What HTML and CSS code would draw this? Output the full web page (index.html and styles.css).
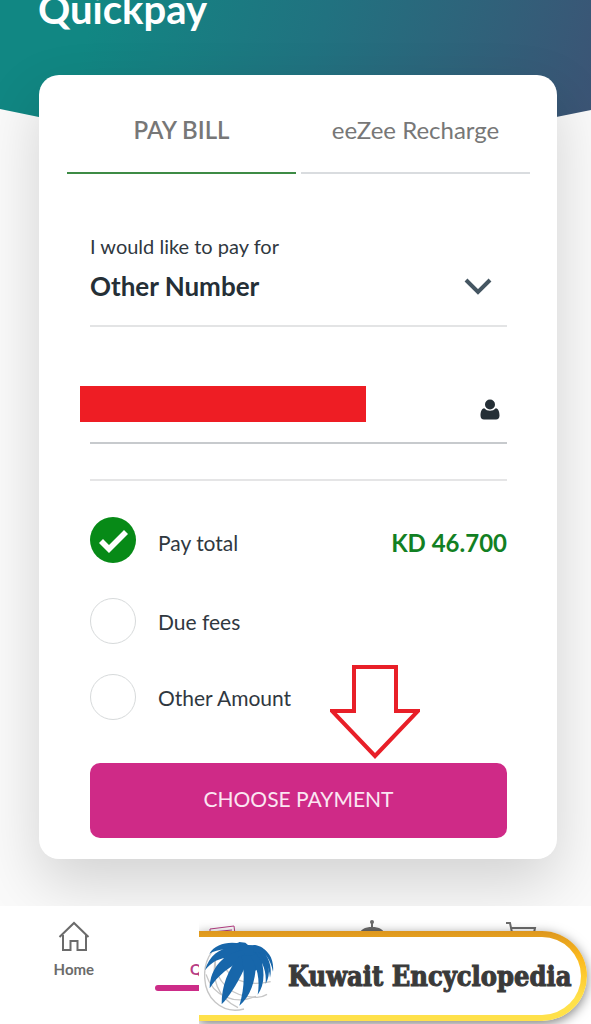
FILE: index.html
```html
<!DOCTYPE html>
<html lang="en">
<head>
<meta charset="utf-8">
<meta name="viewport" content="width=device-width, initial-scale=1">
<title>Quickpay</title>
<link rel="stylesheet" href="styles.css">
</head>
<body>
<div class="page">
  <header class="hero"><h1 class="hero-title">Quickpay</h1></header>
  <main class="content">
    <section class="card">
      <div class="tabs" role="tablist">
        <button class="tab tab-active" role="tab" aria-selected="true">PAY BILL</button>
        <button class="tab" role="tab" aria-selected="false">eeZee Recharge</button>
      </div>
      <form class="form">
        <div class="field">
          <label class="field-label" for="target">I would like to pay for</label>
          <div class="select-row">
            <select class="select" id="target"><option>Other Number</option></select>
            <svg class="chevron" viewBox="0 0 28 18" aria-hidden="true"><path d="M2 3l12 12L26 3"/></svg>
          </div>
        </div>
        <div class="number-row">
          <input class="number" type="tel" aria-label="Phone number">
          <svg class="person" viewBox="0 0 20 21" aria-hidden="true"><circle cx="10" cy="5.5" r="5"/><path d="M4.2 9.300C1.500 9.800.5 13 .5 16.500c0 2.700 1.300 4 3.500 4h12c2.200 0 3.500-1.300 3.500-4 0-3.500-1-6.700-3.700-7.200C14.200 11 12.300 11.800 10 11.800S5.800 11 4.200 9.300z"/></svg>
          <span class="redaction"></span>
        </div>
        <hr class="rule">
        <div class="options">
          <div class="option option-total">
            <input class="radio" type="radio" name="amount" id="total" checked>
            <label class="option-label" for="total">Pay total</label>
            <strong class="amount">KD 46.700</strong>
          </div>
          <div class="option">
            <input class="radio" type="radio" name="amount" id="due">
            <label class="option-label" for="due">Due fees</label>
          </div>
          <div class="option">
            <input class="radio" type="radio" name="amount" id="other">
            <label class="option-label" for="other">Other Amount</label>
          </div>
        </div>
        <div class="submit-row">
          <button class="submit" type="button">CHOOSE PAYMENT</button>
          <svg class="arrow" viewBox="0 0 90 96" aria-hidden="true"><path d="M24 4H66V48H88L45 93 2 48H24z"/></svg>
        </div>
      </form>
    </section>
  </main>
  <footer class="footer">
    <nav class="nav">
      <a class="nav-item" href="#">
        <svg class="nav-icon" viewBox="0 0 32 32" aria-hidden="true"><path d="M1.500 16L16 2l14.500 14M5 14v15h7.500v-9h7v9H28V14"/></svg>
        <span>Home</span>
      </a>
      <a class="nav-item nav-active" href="#">
        <svg class="nav-icon thin" viewBox="0 0 32 32" aria-hidden="true"><path d="M4 12V8l24-3 1 8M6 11l20-2M1 12h28v15H1z"/></svg>
        <span>Quickpay</span>
      </a>
      <a class="nav-item" href="#" aria-label="Services">
        <svg class="nav-icon" viewBox="0 0 32 32" aria-hidden="true"><path class="solid" d="M5 16C7 8 12 6 19 6s12 2 14 10z"/><path d="M19 1v6"/><circle class="solid" cx="19" cy="1" r="2"/></svg>
      </a>
      <a class="nav-item" href="#" aria-label="Shop">
        <svg class="nav-icon" viewBox="0 0 32 32" aria-hidden="true"><path d="M5 2h4l4 19h18l3-14H10"/></svg>
      </a>
    </nav>
    <aside class="banner">
      <div class="pill">
        <div class="pill-inner">
          <svg class="globe" viewBox="28 80 210 210" aria-hidden="true">
            <g class="grid-lines">
              <path d="M52 112C20 155 22 228 62 264c24 22 55 28 86 20"/>
              <path d="M62 130c-6 70 50 120 125 119 12 0 22-4 30-9"/>
              <path d="M88 130c-4 50 50 92 140 72"/>
              <path d="M34 180c22 68 88 92 150 66M64 130c-16 60 4 120 66 150"/>
            </g>
            <g class="palm">
              <path d="M92 92C112 84 125 90 134 83l18 2 8 7 22 1 10 9 10 7 8 14-12 38-20 10-18-24-26-2-36-18z"/>
              <path d="M138 88C98 80 62 90 44 118c20-12 52-18 88-6z"/>
              <path d="M128 100C82 94 44 120 31 168c20-28 50-42 92-38z"/>
              <path d="M142 108C90 118 46 158 45 222c24-40 60-66 112-92z"/>
              <path d="M134 126c-34 38-54 92-53 144 24-26 52-66 82-140z"/>
              <path d="M140 122c12 60 8 106-6 152 38-32 54-90 48-148z"/>
              <path d="M168 126c22 38 28 74 21 115 21-28 24-72 4-128z"/>
              <path d="M180 112c26 32 36 60 33 97 17-30 12-68-14-104z"/>
              <path d="M184 106c24 22 40 48 42 84 8-32-4-66-30-90z"/>
              <path d="M184 100c26 12 44 34 51 72 4-38-14-66-42-74z"/>
              <path d="M176 92c20 0 38 12 47 34-20-12-32-14-46-12z"/>
            </g>
          </svg>
          <span class="brand">Kuwait Encyclopedia</span>
        </div>
      </div>
    </aside>
  </footer>
</div>
</body>
</html>
```
FILE: styles.css
```css
* { box-sizing: border-box; }
body {
  margin: 0;
  background: #fafafa;
  color: #30383f;
  font-family: Lato, "Noto Sans", sans-serif;
  font-size: 21px;
}
button, input, select { font: inherit; color: inherit; }
.page {
  position: relative;
  min-height: 100vh;
  display: flex;
  flex-direction: column;
  overflow: hidden;
}
.hero {
  height: 170px;
  margin-bottom: -95px;
  padding: 0 38px;
  background: linear-gradient(105deg, #118783 15%, #217280 52%, #3c5475 98%);
  clip-path: polygon(0 0, 100% 0, 100% 110px, 50% 170px, 0 109px);
}
.hero-title {
  margin: -15px 0 0;
  color: #fff;
  font-size: 40px;
  line-height: 48px;
}
.content { flex: 1; padding: 0 34px 47px 39px; }
.card {
  position: relative;
  padding: 0 27px 21px 28px;
  background: #fff;
  border-radius: 20px;
  box-shadow: 0 24px 60px rgba(0, 0, 0, 0.16);
}
.tabs { display: grid; grid-template-columns: 1fr 1fr; gap: 5px; }
.tab {
  height: 99px;
  padding: 12px 0 0;
  border: 0;
  border-bottom: 2px solid #d9dcdf;
  background: none;
  color: #777;
  font-size: 24px;
}
.tab-active { border-color: #3d8b45; font-weight: 600; }
.form { padding: 58px 23px 0; }
.field { padding-bottom: 13px; border-bottom: 2px solid #e3e4e5; }
.field-label { display: block; line-height: 28px; font-size: 20px; }
.select-row { display: flex; align-items: center; padding-right: 15px; }
.select {
  flex: 1;
  min-width: 0;
  height: 52px;
  padding: 0;
  border: 0;
  appearance: none;
  background: none;
  color: #252f36;
  font-size: 26px;
  font-weight: 700;
}
.chevron { width: 28px; height: 18px; fill: none; stroke: #455662; stroke-width: 4; }
.number-row {
  position: relative;
  display: flex;
  align-items: flex-end;
  height: 117px;
  padding: 0 7px 22px 0;
  border-bottom: 2px solid #c7cacd;
}
.number { flex: 1; min-width: 0; height: 36px; border: 0; background: none; }
.person { width: 20px; height: 21px; fill: #252f36; }
.redaction {
  position: absolute;
  left: -10px;
  top: 59px;
  width: 286px;
  height: 36px;
  background: #ee1d24;
}
.rule { margin: 35px 0 36px; border: 0; border-top: 2px solid #e5e5e6; }
.options { display: grid; gap: 30px; }
.option { display: flex; align-items: center; gap: 22px; }
.option-total { height: 51px; }
.option-total .radio { align-self: flex-start; }
.radio {
  width: 46px;
  height: 46px;
  margin: 0;
  appearance: none;
  border: 1px solid #d7dadb;
  border-radius: 50%;
}
.radio:checked { border: 0; background: #078a17; }
.radio:checked::before {
  content: "";
  display: block;
  height: 100%;
  background: #fff;
  clip-path: polygon(9px 26px, 13px 22px, 19px 28px, 34px 13px, 38px 17px, 19px 36px);
}
.amount { margin-left: auto; color: #128023; font-size: 24px; }
.submit-row { position: relative; margin-top: 43px; }
.submit {
  display: block;
  width: 100%;
  height: 75px;
  padding: 0 0 4px;
  border: 0;
  border-radius: 10px;
  background: #cf2a87;
  color: #fbe6f2;
  font-size: 21px;
}
.arrow {
  position: absolute;
  left: 240px;
  top: -100px;
  width: 90px;
  height: 96px;
  fill: #fff;
  stroke: #e81f28;
  stroke-width: 4;
}
.footer { position: relative; background: #fff; }
.nav { display: grid; grid-template-columns: repeat(4, 1fr); height: 118px; }
.nav-item {
  display: flex;
  flex-direction: column;
  align-items: center;
  gap: 6px;
  padding-top: 15px;
  color: #6b6b6b;
  font-size: 15px;
  font-weight: 700;
  line-height: 20px;
  text-decoration: none;
}
.nav-icon { width: 32px; height: 32px; fill: none; stroke: currentColor; stroke-width: 2; overflow: visible; }
.nav-icon.thin { stroke-width: 1; }
.nav-icon .solid { fill: currentColor; stroke: none; }
.nav-active { color: #b83d85; }
.nav-active::after {
  content: "";
  width: 134px;
  height: 6px;
  border-radius: 3px;
  background: #cc2c88;
}
.banner {
  position: absolute;
  left: 199px;
  right: 0;
  bottom: 0;
  height: 109px;
  padding: 16px 4px 3px 0;
  overflow: hidden;
}
.pill {
  height: 90px;
  padding: 6px 6px 6px 0;
  border-radius: 0 45px 45px 0;
  background: linear-gradient(#dd971f, #fbb91d 30%, #ffe14a 75%, #ffe14a);
  box-shadow: 0 3px 12px rgba(0, 0, 0, 0.5);
}
.pill-inner {
  display: flex;
  align-items: center;
  gap: 14px;
  height: 100%;
  padding-left: 5px;
  border-radius: 0 39px 39px 0;
  background: #fff;
}
.globe { flex: none; width: 70px; height: 70px; }
.grid-lines { fill: none; stroke: #c6c6c6; stroke-width: 4; }
.palm { fill: #1766aa; }
.brand {
  color: #3a3a3a;
  font-family: "DejaVu Serif Condensed", "DejaVu Serif", serif;
  font-size: 27px;
  font-weight: 700;
  white-space: nowrap;
  -webkit-text-stroke: 1px #3a3a3a;
}
```
